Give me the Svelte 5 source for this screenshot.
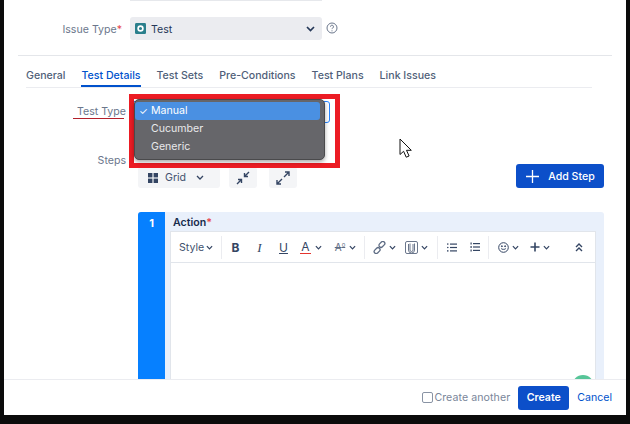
<script>
  const tabs = ['General', 'Test Details', 'Test Sets', 'Pre-Conditions', 'Test Plans', 'Link Issues'];
</script>

<div class="frame">
  <div class="modal">
    <div class="scroll">
      <div class="topfield"></div>
      <div class="row issue">
        <div class="label">Issue Type<span class="req">*</span></div>
        <div class="select">
          <svg class="ticon" width="11" height="11" viewBox="0 0 12 12"><rect width="12" height="12" rx="1.5" fill="#2a7f8c"/><circle cx="6" cy="6" r="2.6" fill="none" stroke="#fff" stroke-width="1.8"/></svg>
          <span>Test</span>
          <svg class="chev" width="9" height="6" viewBox="0 0 9 6"><path d="M1 1l3.5 3.5L8 1" fill="none" stroke="#253858" stroke-width="1.7"/></svg>
        </div>
        <svg class="help" width="12" height="12" viewBox="0 0 12 12"><circle cx="6" cy="6" r="5" fill="none" stroke="#6b778c" stroke-width="1"/><path d="M4.5 4.7a1.5 1.5 0 1 1 2.2 1.3c-.5.3-.7.5-.7 1.1" fill="none" stroke="#6b778c"/><circle cx="6" cy="8.8" r=".6" fill="#6b778c"/></svg>
      </div>
      <div class="divider"></div>
      <div class="tabs">
        {#each tabs as t, i}
          <div class="tab" class:active={i === 1}>{t}</div>
        {/each}
      </div>
      <div class="row type">
        <div class="label wide ul">Test Type</div>
        <div class="typeselect"></div>
      </div>
      <div class="row steps">
        <div class="label wide">Steps</div>
      </div>
      <div class="tools">
        <div class="btn grid">
          <svg width="10" height="10" viewBox="0 0 10 10" fill="#344563"><rect width="4.4" height="4.4"/><rect x="5.6" width="4.4" height="4.4"/><rect y="5.6" width="4.4" height="4.4"/><rect x="5.6" y="5.6" width="4.4" height="4.4"/></svg>
          <span>Grid</span>
          <svg width="8" height="5" viewBox="0 0 8 5"><path d="M1 1l3 3 3-3" fill="none" stroke="#344563" stroke-width="1.3"/></svg>
        </div>
        <div class="btn sq">
          <svg width="14" height="14" viewBox="0 0 14 14" fill="none" stroke="#344563" stroke-width="1.4"><path d="M13 1L8.5 5.5M8.5 2v3.5H12M1 13l4.5-4.5M2 8.5h3.5V12"/></svg>
        </div>
        <div class="btn sq">
          <svg width="14" height="14" viewBox="0 0 14 14" fill="none" stroke="#344563" stroke-width="1.4"><path d="M8 6l5-5M9 1h4v4M6 8l-5 5M1 9v4h4"/></svg>
        </div>
        <div class="add">
          <svg width="15" height="15" viewBox="0 0 15 15"><path d="M7.5 1v13M1 7.5h13" stroke="#fff" stroke-width="1.3"/></svg>
          <span>Add Step</span>
        </div>
      </div>
      <div class="card">
        <div class="num">1</div>
        <div class="body">
          <div class="action">Action<span class="req">*</span></div>
          <div class="editor">
            <div class="toolbar">
              <div class="group style"><span>Style</span><svg class="c" width="7" height="5" viewBox="0 0 8 5"><path d="M1 1l3 3 3-3"/></svg></div>
              <div class="group g2">
                <b class="tb">B</b>
                <i class="tb it">I</i>
                <span class="tb un">U</span>
                <span class="ac tight"><span class="tb color">A</span><svg class="c" width="7" height="5" viewBox="0 0 8 5"><path d="M1 1l3 3 3-3"/></svg></span>
                <span class="ac tight2"><span class="tb fmt">A<sup>o</sup></span><svg class="c" width="7" height="5" viewBox="0 0 8 5"><path d="M1 1l3 3 3-3"/></svg></span>
              </div>
              <div class="group g3">
                <span class="ac"><svg width="13" height="13" viewBox="0 0 13 13" fill="none" stroke="#5e6c84" stroke-width="1.3"><rect x="5.6" y="1.4" width="6.6" height="4" rx="2" transform="rotate(-45 8.9 3.4)"/><rect x=".8" y="7.6" width="6.6" height="4" rx="2" transform="rotate(-45 4.1 9.6)"/></svg><svg class="c" width="7" height="5" viewBox="0 0 8 5"><path d="M1 1l3 3 3-3"/></svg></span>
                <span class="ac"><svg width="13" height="13" viewBox="0 0 13 13" fill="none" stroke="#6b778c" stroke-width="1"><rect x=".5" y=".5" width="12" height="12" rx="1.5"/><path d="M5 2.5v6.5a1.5 1.5 0 0 0 3 0V3M3.5 3v6a3 3 0 0 0 6 0V2.5" /></svg><svg class="c" width="7" height="5" viewBox="0 0 8 5"><path d="M1 1l3 3 3-3"/></svg></span>
              </div>
              <div class="group g4">
                <svg width="10" height="9" viewBox="0 0 10 9" fill="#344563"><rect x="3" y="0.5" width="7" height="1.2"/><rect x="3" y="3.9" width="7" height="1.2"/><rect x="3" y="7.3" width="7" height="1.2"/><circle cx=".8" cy="1.1" r=".8"/><circle cx=".8" cy="4.5" r=".8"/><circle cx=".8" cy="7.9" r=".8"/></svg>
                <svg width="10" height="10" viewBox="0 0 10 10" fill="#344563"><rect x="3" y="1" width="7" height="1.2"/><rect x="3" y="4.4" width="7" height="1.2"/><rect x="3" y="7.8" width="7" height="1.2"/><rect x=".5" y=".5" width="1.2" height="2"/><rect x=".5" y="4" width="1.2" height="2"/><rect x=".5" y="7.5" width="1.2" height="2"/></svg>
              </div>
              <div class="group g5">
                <span class="ac"><svg width="11" height="11" viewBox="0 0 11 11" fill="none" stroke="#344563"><circle cx="5.5" cy="5.5" r="4.8"/><path d="M3.2 6.6c.6 1 3.9 1 4.6 0"/><circle cx="3.9" cy="4.2" r=".5" fill="#344563"/><circle cx="7.1" cy="4.2" r=".5" fill="#344563"/></svg><svg class="c" width="7" height="5" viewBox="0 0 8 5"><path d="M1 1l3 3 3-3"/></svg></span>
                <span class="ac"><svg width="10" height="10" viewBox="0 0 10 10"><path d="M5 .5v9M.5 5h9" stroke="#344563" stroke-width="1.6"/></svg><svg class="c" width="7" height="5" viewBox="0 0 8 5"><path d="M1 1l3 3 3-3"/></svg></span>
                <svg class="collapse" width="8" height="9" viewBox="0 0 8 9" fill="none" stroke="#344563" stroke-width="1.4"><path d="M1 4l3-3 3 3M1 8l3-3 3 3"/></svg>
              </div>
            </div>
            <div class="content"></div>
          </div>
        </div>
      </div>
      <div class="bubble"></div>
    </div>
    <div class="footer">
      <label class="check"><span class="box"></span>Create another</label>
      <div class="create">Create</div>
      <div class="cancel">Cancel</div>
    </div>

    <div class="highlight"></div>
    <div class="menu">
      <div class="opt sel"><span class="tick">✓</span>Manual</div>
      <div class="opt">Cucumber</div>
      <div class="opt">Generic</div>
    </div>
    <svg class="cursor" width="14" height="21" viewBox="0 0 14 21"><path d="M1 1v15.5l3.6-3.2 2.6 5.9 2.9-1.2-2.6-5.7h4.8z" fill="#fff" stroke="#111" stroke-width="1"/></svg>
  </div>
</div>

<style>
  :global(body) { margin: 0; background: #0b0b0b; }
  .frame {
    width: 630px; height: 424px; box-sizing: border-box;
    padding: 0 4px 9px 4px; background: #0b0b0b;
    font-family: Inter, "Liberation Sans", sans-serif; font-size: 10.6px; color: #42526e;
    overflow: hidden;
  }
  .modal { position: relative; height: 415px; background: #fff; display: flex; flex-direction: column; overflow: hidden; }
  .scroll { position: relative; flex: 1; min-height: 0; overflow: hidden; }
  .topfield { width: 192px; height: 1px; margin-left: 126px; background: #e6e8ec; }
  .row { display: flex; align-items: center; }
  .issue { margin-top: 16px; height: 23px; }
  .label { width: 118px; text-align: right; color: #6b778c; margin-right: 8px; flex: none; white-space: nowrap; }
  .issue .label { padding-top: 1px; }
  .label.wide { width: 122px; margin-right: 4px; }
  .req { color: #e5484d; }
  .select {
    width: 192px; height: 23px; box-sizing: border-box; padding: 0 6px 0 5px; background: #ebecf0; border-radius: 3px;
    display: flex; align-items: center; gap: 5px; color: #253858;
  }
  .select span { padding-top: 1px; }
  .ticon { flex: none; }
  .chev { margin-left: auto; margin-right: 1px; }
  .help { margin-left: 4px; margin-top: -1px; }
  .divider { height: 1px; background: #e4e6ea; margin: 15px 14px 0 14px; }
  .tabs { display: flex; gap: 16px; margin: 6px 0 0 22px; width: 566px; height: 25px; border-bottom: 1px solid #ebecf0; font-weight: 500; }
  .tab { height: 25px; box-sizing: border-box; padding-top: 7px; border-bottom: 2px solid transparent; color: #505f79; white-space: nowrap; margin-bottom: -1px; }
  .tab.active { color: #0052cc; border-bottom-color: #0052cc; }
  .type { margin-top: 13px; height: 22px; }
  .label.ul { position: relative; top: -1px; }
  .label.ul::after { content: ""; position: absolute; right: 2px; bottom: -1px; width: 51px; height: 1px; background: #b3202a; }
  .typeselect { width: 198px; height: 20px; border: 1px solid #2684ff; border-radius: 3px; }
  .steps { height: 20px; margin-top: 27px; }
  .tools { display: flex; align-items: flex-end; margin: -6px 22px 0 134px; height: 24px; gap: 9px; }
  .btn { height: 21px; background: #f4f5f7; border-radius: 3px; display: flex; align-items: center; justify-content: center; color: #42526e; }
  .grid { width: 82px; gap: 7px; justify-content: flex-start; padding-left: 10px; box-sizing: border-box; }
  .grid span { margin-right: 3px; }
  .sq { width: 28px; }
  .sq + .sq { margin-left: 3px; }
  .add { margin-left: auto; width: 88px; height: 24px; background: #0c4fc9; color: #fff; border-radius: 3px; display: flex; align-items: center; justify-content: center; gap: 8px; font-weight: 500; }
  .card { display: flex; margin: 24px 22px 0 134px; height: 190px; background: #e9f0fb; border-radius: 3px; }
  .num { width: 27px; flex: none; background: #0680ff; color: #fff; text-align: center; font-weight: 700; font-size: 11px; padding-top: 4px; box-sizing: border-box; border-radius: 3px 0 0 0; }
  .body { flex: 1; padding: 4px 8px 0 5px; min-width: 0; }
  .action { font-weight: 600; color: #172b4d; height: 15px; line-height: 14px; padding-left: 3px; }
  .editor { background: #fff; border: 1px solid #e1e5eb; height: 170px; }
  .toolbar { height: 30px; border-bottom: 1px solid #e1e5eb; display: flex; align-items: center; padding-left: 8px; color: #42526e; }
  .group { display: flex; align-items: center; height: 23px; border-right: 1px solid #ebecf0; box-sizing: border-box; flex: none; }
  .style { gap: 2px; width: 43px; }
  .g2 { padding-left: 8px; width: 143px; gap: 13px; }
  .g3 { padding-left: 8px; width: 73px; gap: 9px; }
  .g4 { padding-left: 9px; width: 51px; gap: 13px; }
  .g5 { border: none; padding-left: 9px; gap: 11px; flex: 1; }
  .collapse { margin-left: auto; margin-right: 12px; }
  .ac { display: inline-flex; align-items: center; gap: 3px; }
  .tight { margin-left: -2px; }
  .tight2 { margin-left: -2px; gap: 2px; }
  .c path { fill: none; stroke: #344563; stroke-width: 1.4; }
  .tb { font-size: 12px; color: #344563; width: 11px; text-align: center; line-height: 13px; font-style: normal; }
  .it { font-style: italic; font-family: "Liberation Serif", serif; font-size: 13px; }
  .un { text-decoration: underline; }
  .color { border-bottom: 1.5px solid #e5342f; line-height: 12px; margin-right: 1px; }
  .fmt { font-size: 10px; color: #5e6c84; text-decoration: line-through; position: relative; width: 14px; }
  .fmt sup { font-size: 6px; line-height: 0; }
  .content { height: 139px; }
  .bubble { position: absolute; left: 568px; top: 375px; width: 22px; height: 22px; border-radius: 50%; background: #57c598; }
  .footer {
    height: 36px; flex: none; box-sizing: border-box; border-top: 1px solid #ebecf0; background: #fff; position: relative;
    display: flex; align-items: center; justify-content: flex-end; padding-right: 14px;
  }
  .check { display: flex; align-items: center; gap: 1px; color: #7a869a; margin-right: 8px; letter-spacing: .08px; }
  .box { width: 9px; height: 9px; border: 1px solid #8993a4; border-radius: 2px; margin-top: -1px; }
  .create { width: 51px; height: 24px; background: #0c4fc9; color: #fff; border-radius: 3px; text-align: center; line-height: 24px; font-weight: 600; margin-right: 8px; }
  .cancel { color: #0052cc; }
  .highlight { position: absolute; left: 125px; top: 94px; width: 211px; height: 74px; box-sizing: border-box; border: 5px solid #ec1c24; }
  .menu {
    position: absolute; left: 130px; top: 99px; width: 191px; height: 61px; box-sizing: border-box; padding: 2px 4px 0 0;
    background: #66666a; border: 1px solid #4a4a4c; border-radius: 5px; box-shadow: 0 2px 4px rgba(0,0,0,.35); color: #e9e9ea; z-index: 2;
  }
  .opt { height: 18px; line-height: 18px; padding-left: 16px; border-radius: 3px; position: relative; }
  .opt.sel { background: #4a90e2; color: #fff; }
  .tick { position: absolute; left: 4px; font-size: 10px; }
  .cursor { position: absolute; left: 395px; top: 138px; z-index: 3; }
</style>
